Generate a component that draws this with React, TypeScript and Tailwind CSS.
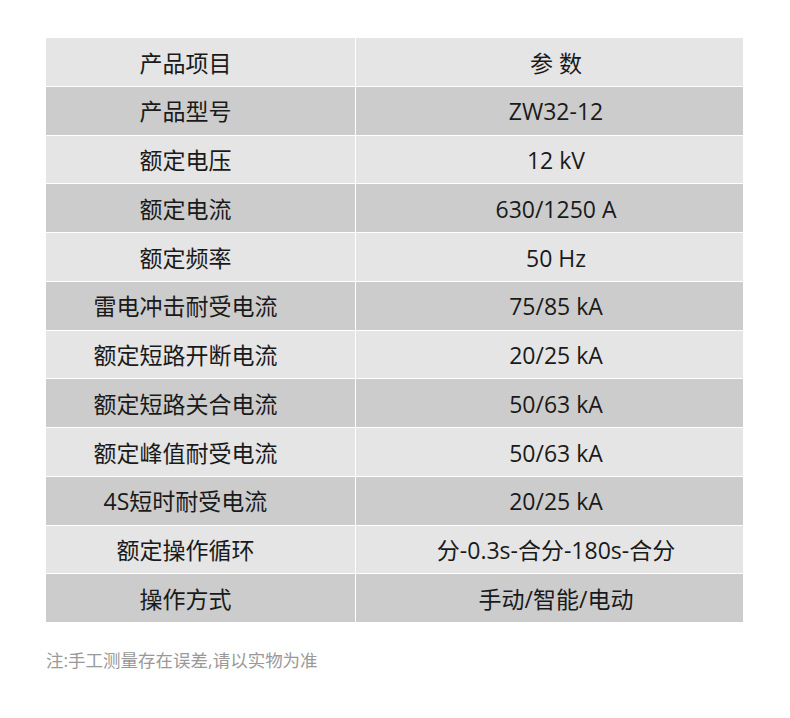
const rows: [string, string][] = [
  ['产品项目', '参 数'],
  ['产品型号', 'ZW32-12'],
  ['额定电压', '12 kV'],
  ['额定电流', '630/1250 A'],
  ['额定频率', '50 Hz'],
  ['雷电冲击耐受电流', '75/85 kA'],
  ['额定短路开断电流', '20/25 kA'],
  ['额定短路关合电流', '50/63 kA'],
  ['额定峰值耐受电流', '50/63 kA'],
  ['4S短时耐受电流', '20/25 kA'],
  ['额定操作循环', '分-0.3s-合分-180s-合分'],
  ['操作方式', '手动/智能/电动'],
];

export default function App() {
  return (
    <div
      className="w-[790px] h-[718px] bg-white pt-[38px] pl-[46px]"
      style={{ fontFamily: '"Open Sans", "Noto Sans CJK SC", sans-serif' }}
    >
      <div className="w-[697px] h-[584px] grid grid-rows-12 gap-y-px bg-white">
        {rows.map(([label, value], i) => (
          <div
            key={label}
            className={`grid grid-cols-[310px_1fr] gap-x-px text-[23px] text-[#1a1a1a] ${
              i % 2 === 0 ? 'bg-[#e5e5e5]' : 'bg-[#cccccc]'
            }`}
          >
            <div className="flex items-center justify-center pr-[30px] pt-[2px] border-r border-white">{label}</div>
            <div className="flex items-center justify-center pl-[12px] pt-[2px]">{value}</div>
          </div>
        ))}
      </div>
      <p className="mt-[25px] text-[17.5px] text-[#999999]">注:手工测量存在误差,请以实物为准</p>
    </div>
  );
}
